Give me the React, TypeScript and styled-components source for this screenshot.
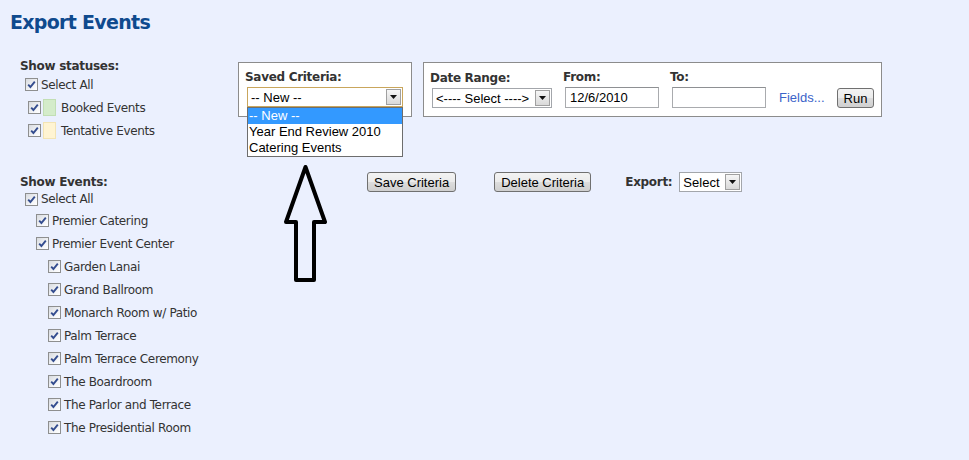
import React from 'react';
import styled, { createGlobalStyle } from 'styled-components';

const GlobalStyle = createGlobalStyle`
  html, body {
    margin: 0;
    padding: 0;
    background: #ebf0fe;
  }
  body {
    font-family: "DejaVu Sans", Verdana, sans-serif;
    color: #222;
  }
`;

interface CheckItem {
  label: string;
  level: number;
}

const events: CheckItem[] = [
  { label: 'Premier Catering', level: 1 },
  { label: 'Premier Event Center', level: 1 },
  { label: 'Garden Lanai', level: 2 },
  { label: 'Grand Ballroom', level: 2 },
  { label: 'Monarch Room w/ Patio', level: 2 },
  { label: 'Palm Terrace', level: 2 },
  { label: 'Palm Terrace Ceremony', level: 2 },
  { label: 'The Boardroom', level: 2 },
  { label: 'The Parlor and Terrace', level: 2 },
  { label: 'The Presidential Room', level: 2 },
];

const savedOptions = ['-- New --', 'Year End Review 2010', 'Catering Events'];

const Check = () => (
  <CheckBox>
    <svg width="9" height="9" viewBox="0 0 9 9">
      <path d="M1.2 4.6 L3.4 7 L7.8 1.6" fill="none" stroke="#344d8f" strokeWidth="1.9" />
    </svg>
  </CheckBox>
);

const DropButton = () => (
  <DropBtn>
    <svg width="7" height="4" viewBox="0 0 7 4">
      <path d="M0 0 H7 L3.5 4 Z" fill="#111" />
    </svg>
  </DropBtn>
);

const App = () => {
  return (
    <Page>
      <GlobalStyle />
      <Title>Export Events</Title>

      <Layout>
        <Section>
          <SectionLabel>Show statuses:</SectionLabel>
          <CheckRow $indent={5} $height={23}>
            <Check />
            <span>Select All</span>
          </CheckRow>
          <CheckRow $indent={8} $height={23}>
            <Check />
            <Swatch $color="#d4ecca" $border="#c2dfb4" />
            <span>Booked Events</span>
          </CheckRow>
          <CheckRow $indent={8} $height={23}>
            <Check />
            <Swatch $color="#fff4d2" $border="#f3e4b4" />
            <span>Tentative Events</span>
          </CheckRow>
        </Section>

        <CriteriaRow>
          <CriteriaBox $width={174}>
            <Field>
              <FieldLabel>Saved Criteria:</FieldLabel>
              <SelectWrap>
                <FakeSelect $width={156} $focused>
                  <SelectText>-- New --</SelectText>
                  <DropButton />
                </FakeSelect>
                <OptionList>
                  {savedOptions.map((opt, i) => (
                    <OptionItem key={opt} $active={i === 0}>
                      {opt}
                    </OptionItem>
                  ))}
                </OptionList>
              </SelectWrap>
            </Field>
            <Arrow width="52" height="126" viewBox="0 0 52 126">
              <path
                d="M25.5 7 L45 62 L34 62 L34 120 L16 120 L16 62 L6 62 Z"
                fill="none"
                stroke="#000"
                strokeWidth="4"
                strokeLinejoin="round"
              />
            </Arrow>
          </CriteriaBox>

          <CriteriaBox $width={459}>
            <DateFields>
              <Field>
                <FieldLabel>Date Range:</FieldLabel>
                <FakeSelect $width={120}>
                  <SelectText>&lt;---- Select ----&gt;</SelectText>
                  <DropButton />
                </FakeSelect>
              </Field>
              <Field>
                <FieldLabel>From:</FieldLabel>
                <TextInput defaultValue="12/6/2010" />
              </Field>
              <Field>
                <FieldLabel>To:</FieldLabel>
                <TextInput defaultValue="" />
              </Field>
              <FieldsLink href="#">Fields...</FieldsLink>
              <Button>Run</Button>
            </DateFields>
          </CriteriaBox>
        </CriteriaRow>

        <Section>
          <SectionLabel $top={3}>Show Events:</SectionLabel>
          <CheckRow $indent={5} $height={20}>
            <Check />
            <span>Select All</span>
          </CheckRow>
          {events.map((ev) => (
            <CheckRow key={ev.label} $indent={ev.level === 1 ? 16 : 28} $height={23}>
              <Check />
              <span>{ev.label}</span>
            </CheckRow>
          ))}
        </Section>

        <ActionBar>
          <Button>Save Criteria</Button>
          <Button $space={38}>Delete Criteria</Button>
          <ExportGroup>
            <FieldLabel as="span">Export:</FieldLabel>
            <FakeSelect $width={63}>
              <SelectText>Select</SelectText>
              <DropButton />
            </FakeSelect>
          </ExportGroup>
        </ActionBar>
      </Layout>
    </Page>
  );
};

export default App;

const Page = styled.div`
  padding: 10px 10px 0;
  min-height: 460px;
  box-sizing: border-box;
`;

const Title = styled.h1`
  margin: 0;
  font-size: 19px;
  line-height: 24px;
  font-weight: bold;
  letter-spacing: -0.7px;
  color: #0f4a8e;
`;

const Layout = styled.div`
  display: grid;
  grid-template-columns: 218px 1fr;
  row-gap: 30px;
  margin-top: 25px;
  padding-left: 10px;
  align-items: start;
`;

const Section = styled.div`
  display: flex;
  flex-direction: column;
`;

const SectionLabel = styled.div<{ $top?: number }>`
  font-size: 12px;
  line-height: 14px;
  font-weight: bold;
  letter-spacing: -0.3px;
  color: #333;
  padding-top: ${(p) => p.$top || 0}px;
`;

const CheckRow = styled.label<{ $indent: number; $height: number }>`
  display: flex;
  align-items: center;
  height: ${(p) => p.$height}px;
  padding-left: ${(p) => p.$indent}px;
  font-size: 12px;
  letter-spacing: -0.35px;
  color: #333;
  white-space: nowrap;
`;

const CheckBox = styled.span`
  width: 13px;
  height: 13px;
  box-sizing: border-box;
  border: 1px solid #8e8f8f;
  background: linear-gradient(135deg, #d8dbe0 0%, #f6f7f9 70%, #ffffff 100%);
  display: inline-flex;
  align-items: center;
  justify-content: center;
  margin-right: 3px;
  flex-shrink: 0;
`;

const Swatch = styled.span<{ $color: string; $border: string }>`
  width: 13px;
  height: 17px;
  box-sizing: border-box;
  background: ${(p) => p.$color};
  border: 1px solid ${(p) => p.$border};
  margin: 0 5px 0 -1px;
  flex-shrink: 0;
`;

const CriteriaRow = styled.div`
  display: flex;
  gap: 11px;
  margin-top: 3px;
`;

const CriteriaBox = styled.div<{ $width: number }>`
  position: relative;
  width: ${(p) => p.$width}px;
  box-sizing: border-box;
  background: #ffffff;
  border: 1px solid #8c8c8c;
  padding: 7px 9px 8px 6px;
`;

const DateFields = styled.div`
  display: flex;
  align-items: flex-end;
  gap: 11px;
`;

const Field = styled.div`
  display: flex;
  flex-direction: column;
  align-items: flex-start;
`;

const FieldLabel = styled.div`
  font-size: 12px;
  line-height: 14px;
  font-weight: bold;
  letter-spacing: -0.3px;
  color: #333;
  margin-bottom: 3px;
`;

const SelectWrap = styled.div`
  position: relative;
  margin-left: 2px;
`;

const FakeSelect = styled.div<{ $width: number; $focused?: boolean }>`
  width: ${(p) => p.$width}px;
  height: 20px;
  box-sizing: border-box;
  display: flex;
  align-items: center;
  background: #fff;
  border: 1px solid ${(p) => (p.$focused ? '#c9a65c' : '#a3a6ab')};
  font-family: "Liberation Sans", Arial, sans-serif;
  font-size: 13px;
  color: #000;
  margin-left: ${(p) => (p.$focused ? 0 : 2)}px;
`;

const SelectText = styled.span`
  flex: 1;
  padding-left: 3px;
  white-space: nowrap;
  overflow: hidden;
`;

const DropBtn = styled.span`
  width: 15px;
  height: 16px;
  box-sizing: border-box;
  margin-right: 1px;
  border: 1px solid #a0a0a0;
  background: linear-gradient(#f6f6f6, #d9d9d9);
  display: inline-flex;
  align-items: center;
  justify-content: center;
`;

const OptionList = styled.div`
  position: absolute;
  top: 100%;
  left: 0;
  width: 156px;
  box-sizing: border-box;
  background: #fff;
  border: 1px solid #6d6d6d;
  font-family: "Liberation Sans", Arial, sans-serif;
  font-size: 13px;
  z-index: 2;
`;

const OptionItem = styled.div<{ $active?: boolean }>`
  height: 16px;
  line-height: 16px;
  padding-left: 1px;
  white-space: nowrap;
  background: ${(p) => (p.$active ? '#3399ff' : 'transparent')};
  color: ${(p) => (p.$active ? '#fff' : '#000')};
`;

const Arrow = styled.svg`
  position: absolute;
  left: 41px;
  top: 97px;
  z-index: 1;
`;

const TextInput = styled.input`
  width: 94px;
  height: 21px;
  box-sizing: border-box;
  margin: 0 0 0 2px;
  border: 1px solid #a9abae;
  border-top-color: #8e9093;
  padding: 0 4px;
  font-family: "Liberation Sans", Arial, sans-serif;
  font-size: 13px;
  color: #000;
  outline: none;
`;

const FieldsLink = styled.a`
  font-family: "Liberation Sans", Arial, sans-serif;
  font-size: 13px;
  line-height: 20px;
  color: #3b63c9;
  text-decoration: none;
  margin-left: 2px;
`;

const Button = styled.button<{ $space?: number }>`
  height: 20px;
  padding: 0 6px;
  margin: 0 0 0 ${(p) => p.$space ?? 1}px;
  border: 1px solid #707070;
  border-radius: 3px;
  background: linear-gradient(#f3f3f3 0%, #ebebeb 50%, #dddddd 51%, #cfcfcf 100%);
  font-family: "Liberation Sans", Arial, sans-serif;
  font-size: 13px;
  color: #000;
`;

const ActionBar = styled.div`
  display: flex;
  align-items: center;
  padding-left: 128px;
`;

const ExportGroup = styled.div`
  display: flex;
  align-items: center;
  gap: 5px;
  margin-left: 34px;

  ${FieldLabel} {
    margin-bottom: 0;
  }
`;
